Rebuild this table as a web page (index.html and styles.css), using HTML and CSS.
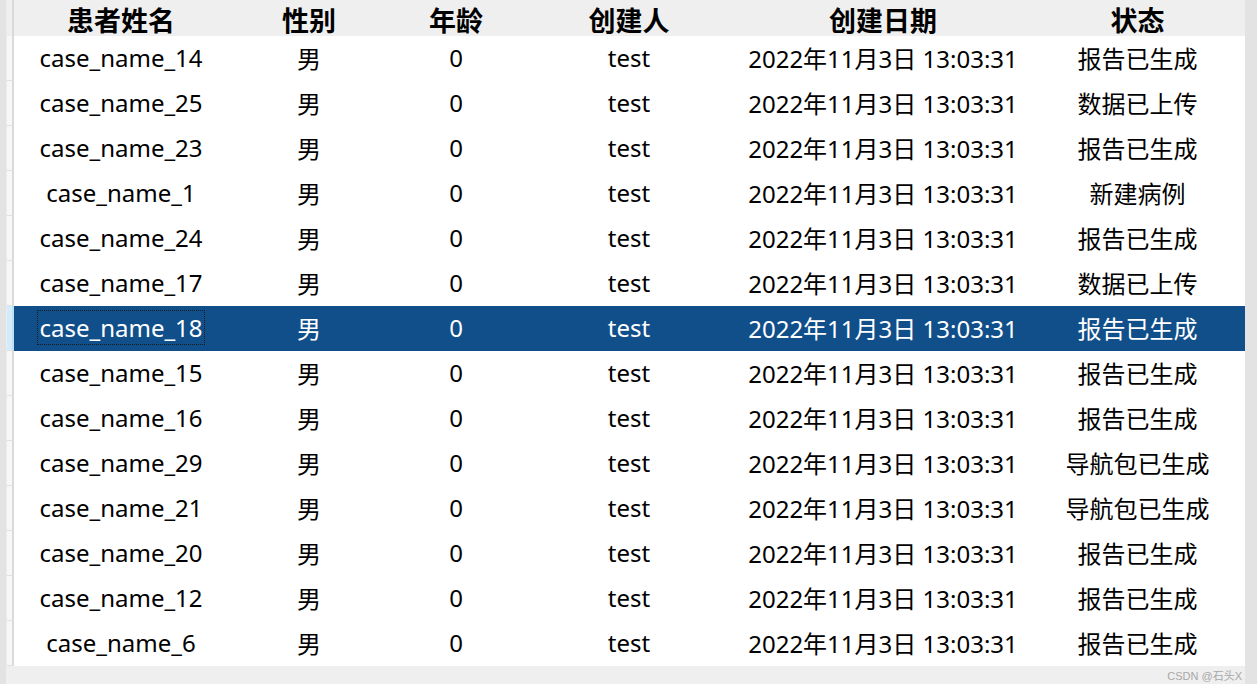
FILE: index.html
```html
<!DOCTYPE html>
<html>
<head>
<meta charset="utf-8">
<link rel="stylesheet" href="styles.css">
</head>
<body>
<div class="page">
  <div class="edge"></div>
  <div class="view">
    <div class="row hdr">
      <div class="stub"></div>
      <div class="c">患者姓名</div><div class="c">性别</div><div class="c">年龄</div><div class="c">创建人</div><div class="c">创建日期</div><div class="c">状态</div>
    </div>
    <div class="body">
      <div class="row"><div class="stub"></div><div class="c">case_name_14</div><div class="c">男</div><div class="c">0</div><div class="c">test</div><div class="c">2022年11月3日 13:03:31</div><div class="c">报告已生成</div></div>
      <div class="row"><div class="stub"></div><div class="c">case_name_25</div><div class="c">男</div><div class="c">0</div><div class="c">test</div><div class="c">2022年11月3日 13:03:31</div><div class="c">数据已上传</div></div>
      <div class="row"><div class="stub"></div><div class="c">case_name_23</div><div class="c">男</div><div class="c">0</div><div class="c">test</div><div class="c">2022年11月3日 13:03:31</div><div class="c">报告已生成</div></div>
      <div class="row"><div class="stub"></div><div class="c">case_name_1</div><div class="c">男</div><div class="c">0</div><div class="c">test</div><div class="c">2022年11月3日 13:03:31</div><div class="c">新建病例</div></div>
      <div class="row"><div class="stub"></div><div class="c">case_name_24</div><div class="c">男</div><div class="c">0</div><div class="c">test</div><div class="c">2022年11月3日 13:03:31</div><div class="c">报告已生成</div></div>
      <div class="row"><div class="stub"></div><div class="c">case_name_17</div><div class="c">男</div><div class="c">0</div><div class="c">test</div><div class="c">2022年11月3日 13:03:31</div><div class="c">数据已上传</div></div>
      <div class="row sel"><div class="stub"></div><div class="c"><span class="focus">case_name_18</span></div><div class="c">男</div><div class="c">0</div><div class="c">test</div><div class="c">2022年11月3日 13:03:31</div><div class="c">报告已生成</div></div>
      <div class="row"><div class="stub"></div><div class="c">case_name_15</div><div class="c">男</div><div class="c">0</div><div class="c">test</div><div class="c">2022年11月3日 13:03:31</div><div class="c">报告已生成</div></div>
      <div class="row"><div class="stub"></div><div class="c">case_name_16</div><div class="c">男</div><div class="c">0</div><div class="c">test</div><div class="c">2022年11月3日 13:03:31</div><div class="c">报告已生成</div></div>
      <div class="row"><div class="stub"></div><div class="c">case_name_29</div><div class="c">男</div><div class="c">0</div><div class="c">test</div><div class="c">2022年11月3日 13:03:31</div><div class="c">导航包已生成</div></div>
      <div class="row"><div class="stub"></div><div class="c">case_name_21</div><div class="c">男</div><div class="c">0</div><div class="c">test</div><div class="c">2022年11月3日 13:03:31</div><div class="c">导航包已生成</div></div>
      <div class="row"><div class="stub"></div><div class="c">case_name_20</div><div class="c">男</div><div class="c">0</div><div class="c">test</div><div class="c">2022年11月3日 13:03:31</div><div class="c">报告已生成</div></div>
      <div class="row"><div class="stub"></div><div class="c">case_name_12</div><div class="c">男</div><div class="c">0</div><div class="c">test</div><div class="c">2022年11月3日 13:03:31</div><div class="c">报告已生成</div></div>
      <div class="row"><div class="stub"></div><div class="c">case_name_6</div><div class="c">男</div><div class="c">0</div><div class="c">test</div><div class="c">2022年11月3日 13:03:31</div><div class="c">报告已生成</div></div>
    </div>
    <div class="foot"><span class="mark">CSDN @石头X</span></div>
  </div>
  <div class="vscroll"></div>
</div>
</body>
</html>
```

FILE: styles.css
```css
html, body {
  margin: 0;
  padding: 0;
}
body {
  background: #efefef;
  font-family: "Noto Sans", "Noto Sans CJK SC", sans-serif;
  color: #000;
  overflow: hidden;
}
.page {
  display: flex;
  height: 684px;
}
.edge {
  width: 6px;
  background: #e3e3e3;
}
.vscroll {
  width: 12px;
  background: #e3e3e3;
}
.view {
  width: 1239px;
  display: flex;
  flex-direction: column;
}
.row {
  display: grid;
  grid-template-columns: 8px 214px 162px 132px 214px 294px 215px;
  height: 45px;
  background: #fff;
  font-size: 24px;
}
.row .c {
  display: flex;
  align-items: center;
  justify-content: center;
  white-space: nowrap;
  padding-bottom: 3px;
}
.hdr {
  height: 36px;
  background: #efefef;
  font-weight: bold;
  font-size: 27px;
}
.hdr .c {
  padding-bottom: 4px;
}
.hdr .stub {
  background: #efefef;
}
.stub {
  background: #f7f7f7;
  border-left: 1px solid #ececec;
  border-right: 2px solid #dadada;
  border-bottom: 1px solid #e2e2e2;
  box-sizing: border-box;
}
.sel {
  background: #114f8b;
  color: #fff;
}
.sel .stub {
  background: #d3ecfb;
  border-right-color: #bfe0f4;
}
.focus {
  outline: 1px dotted #1a1a1a;
  outline-offset: 0;
  padding: 0 1px;
  line-height: 33px;
}
.foot {
  flex: 1;
  display: flex;
  justify-content: flex-end;
  align-items: center;
  padding-right: 3px;
}
.mark {
  font-size: 11px;
  color: #a8a8a8;
  font-family: "Liberation Sans", "Noto Sans CJK SC", sans-serif;
}
```
